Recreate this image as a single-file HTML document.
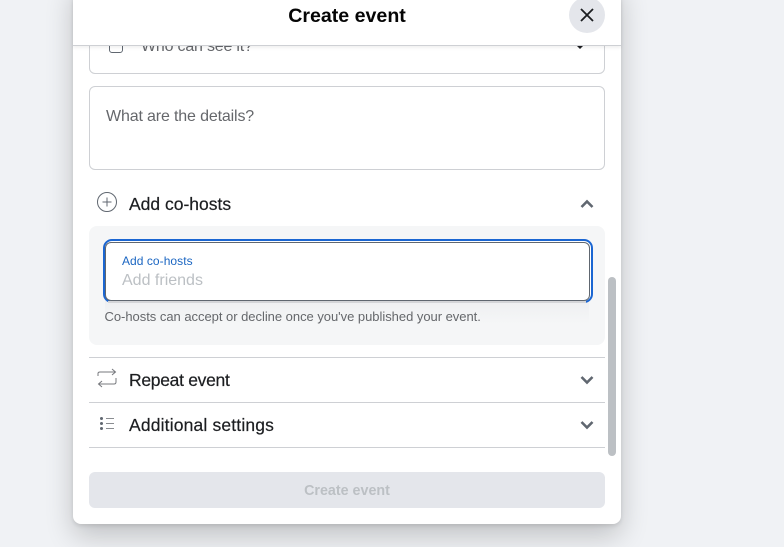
<!DOCTYPE html>
<html>
<head>
<meta charset="utf-8">
<style>
html,body{margin:0;padding:0;width:784px;height:547px;overflow:hidden;background:#f0f2f5;font-family:"Liberation Sans",sans-serif}
.a{position:absolute;white-space:nowrap}
#modal{position:absolute;left:73px;top:-20px;width:548px;height:544px;background:#fff;border-radius:8px;box-shadow:0 12px 28px rgba(0,0,0,.2),0 2px 4px rgba(0,0,0,.1)}
.line{position:absolute;left:89px;width:516px;height:1px;background:#ced0d4}
.row{font-size:17.5px;color:#1c1e21;line-height:20px;-webkit-text-stroke:.2px #1c1e21}
</style>
</head>
<body>
<div id="modal"></div>

<div class="a" style="left:89px;top:20px;width:514px;height:52px;border:1px solid #ced0d4;border-radius:6px"></div>
<div class="a" style="left:109px;top:39px;width:14px;height:14px;border:1.5px solid #606770;border-radius:3px;box-sizing:border-box"></div>
<div class="a" style="left:141px;top:37px;font-size:16px;line-height:20px;color:#65676b;letter-spacing:-.2px">Who can see it?</div>
<div class="a" style="left:577px;top:46px;width:0;height:0;border-left:3px solid transparent;border-right:3px solid transparent;border-top:3px solid #1c1e21"></div>

<div class="a" style="left:73px;top:0;width:548px;height:45px;background:#fff;border-bottom:1px solid #ced0d4;box-shadow:0 2px 3px rgba(0,0,0,.06)"></div>
<div class="a" style="left:73px;top:4px;width:548px;text-align:center;font-size:19.6px;font-weight:bold;line-height:24px;color:#050505">Create event</div>
<div class="a" style="left:569px;top:-3px;width:36px;height:36px;border-radius:50%;background:#e4e6eb"></div>
<svg class="a" style="left:579px;top:7px" width="16" height="16" viewBox="0 0 16 16"><path d="M2 2 L14 14 M14 2 L2 14" stroke="#1c1e21" stroke-width="1.8" fill="none"/></svg>

<div class="a" style="left:89px;top:86px;width:514px;height:82px;border:1px solid #ced0d4;border-radius:6px"></div>
<div class="a" style="left:106px;top:107px;font-size:16px;line-height:20px;color:#65676b;letter-spacing:-.15px">What are the details?</div>

<svg class="a" style="left:96px;top:191px" width="22" height="22" viewBox="0 0 22 22"><circle cx="11" cy="11" r="9.5" stroke="#606770" stroke-width="1" fill="none"/><path d="M11 6.5V15.5M6.5 11H15.5" stroke="#606770" stroke-width="1" fill="none"/></svg>
<div class="a row" style="left:129px;top:194px">Add co-hosts</div>
<svg class="a" style="left:580px;top:198px" width="14" height="12" viewBox="0 0 14 12"><path d="M1.5 9 L7 3.5 L12.5 9" stroke="#606770" stroke-width="2.6" fill="none"/></svg>

<div class="a" style="left:89px;top:226px;width:516px;height:119px;background:#f5f6f7;border-radius:8px"></div>
<div class="a" style="left:105px;top:300px;width:484px;height:24px;background:linear-gradient(#eeeff1,#f5f6f7)"></div>
<div class="a" style="left:102.5px;top:238.5px;width:490px;height:64px;box-sizing:border-box;border:2.5px solid #1b66d2;border-radius:9px;background:#fff"></div>
<div class="a" style="left:105px;top:241.5px;width:485px;height:59px;box-sizing:border-box;border:1px solid #606770;border-radius:6px;background:#fff"></div>
<div class="a" style="left:108px;top:300.5px;width:478px;height:2.5px;background:#d4d5d8"></div>
<div class="a" style="left:122px;top:254px;font-size:12px;line-height:15px;color:#1b66c2;letter-spacing:.05px">Add co-hosts</div>
<div class="a" style="left:122px;top:271px;font-size:16px;line-height:20px;color:#bcc0c4">Add friends</div>
<div class="a" style="left:104.5px;top:309px;font-size:13px;line-height:16px;color:#65676b;letter-spacing:-.03px">Co-hosts can accept or decline once you've published your event.</div>

<div class="line" style="top:357px"></div>
<svg class="a" style="left:97px;top:368px" width="22" height="22" viewBox="0 0 22 22"><path d="M1 8 V5.5 Q1 4 3 4 H18 M15 1 L18.5 4 L15 7" stroke="#77797e" stroke-width="1" fill="none"/><path d="M19 10 V14 Q19 16 17 16 H2 M5 13 L1.5 16 L5 19" stroke="#77797e" stroke-width="1" fill="none"/></svg>
<div class="a row" style="left:129px;top:370px;letter-spacing:-.3px">Repeat event</div>
<svg class="a" style="left:580px;top:374px" width="14" height="12" viewBox="0 0 14 12"><path d="M1.5 3 L7 8.5 L12.5 3" stroke="#606770" stroke-width="2.6" fill="none"/></svg>

<div class="line" style="top:402px"></div>
<svg class="a" style="left:99px;top:416px" width="18" height="16" viewBox="0 0 18 16"><circle cx="2.5" cy="2.5" r="1.5" fill="#606770"/><circle cx="2.5" cy="7.5" r="1.5" fill="#606770"/><circle cx="2.5" cy="12.5" r="1.5" fill="#606770"/><path d="M7 2.5H15M7 7.5H15M7 12.5H15" stroke="#8a8d91" stroke-width="1" fill="none"/></svg>
<div class="a row" style="left:129px;top:415px;letter-spacing:.16px">Additional settings</div>
<svg class="a" style="left:580px;top:419px" width="14" height="12" viewBox="0 0 14 12"><path d="M1.5 3 L7 8.5 L12.5 3" stroke="#606770" stroke-width="2.6" fill="none"/></svg>

<div class="line" style="top:447px"></div>
<div class="a" style="left:89px;top:472px;width:516px;height:36px;background:#e4e6eb;border-radius:6px;text-align:center;line-height:38px;font-size:14.3px;font-weight:bold;color:#bcc0c4">Create event</div>

<div class="a" style="left:608px;top:277px;width:8px;height:179px;background:#bcc0c4;border-radius:4px"></div>
</body>
</html>
